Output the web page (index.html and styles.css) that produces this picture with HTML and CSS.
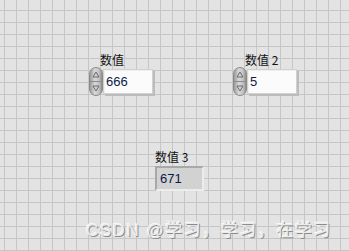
FILE: index.html
```html
<!DOCTYPE html>
<html>
<head>
<meta charset="utf-8">
<link rel="stylesheet" href="styles.css">
</head>
<body>
<div class="panel">
  <div class="ctrl c1">
    <div class="label">数值</div>
    <div class="row">
      <div class="spin">
        <div class="half up"><svg width="8" height="7" viewBox="0 0 8 7"><path d="M1 6 L4 1 L7 6 Z" fill="none" stroke="#6a6a6a" stroke-width="1"/></svg></div>
        <div class="half down"><svg width="8" height="7" viewBox="0 0 8 7"><path d="M1 1 L4 6 L7 1 Z" fill="none" stroke="#6a6a6a" stroke-width="1"/></svg></div>
      </div>
      <div class="box">666</div>
    </div>
  </div>
  <div class="ctrl c2">
    <div class="label">数值 2</div>
    <div class="row">
      <div class="spin">
        <div class="half up"><svg width="8" height="7" viewBox="0 0 8 7"><path d="M1 6 L4 1 L7 6 Z" fill="none" stroke="#6a6a6a" stroke-width="1"/></svg></div>
        <div class="half down"><svg width="8" height="7" viewBox="0 0 8 7"><path d="M1 1 L4 6 L7 1 Z" fill="none" stroke="#6a6a6a" stroke-width="1"/></svg></div>
      </div>
      <div class="box">5</div>
    </div>
  </div>
  <div class="ctrl c3">
    <div class="label">数值 3</div>
    <div class="ind">671</div>
  </div>
  <div class="mark">CSDN @学习，学习，在学习</div>
</div>
</body>
</html>
```
FILE: styles.css
```css
html, body {
  margin: 0;
  padding: 0;
}
.panel {
  position: relative;
  width: 349px;
  height: 251px;
  overflow: hidden;
  background-color: #e3e3e3;
  background-image:
    linear-gradient(to right, #c6c6c6 1px, transparent 1px),
    linear-gradient(to bottom, #c6c6c6 1px, transparent 1px);
  background-size: 12px 12px;
  background-position: 4px 10px;
  font-family: "Liberation Sans", "Noto Sans CJK SC", sans-serif;
}
.ctrl {
  position: absolute;
  display: flex;
  flex-direction: column;
}
.c1 { left: 89px; top: 51px; }
.c2 { left: 233px; top: 51px; }
.c3 { left: 155px; top: 148px; }
.label {
  font-family: "Noto Sans CJK SC", sans-serif;
  font-size: 12px;
  line-height: 17px;
  color: #111;
}
.c1 .label { padding-left: 11px; }
.c2 .label { padding-left: 12px; }
.row {
  display: flex;
  align-items: center;
  margin-top: -1px;
}
.spin {
  width: 14px;
  height: 29px;
  border-radius: 7px;
  background: linear-gradient(to right, #9a9a9a, #d8d8d8 40%, #c4c4c4 75%, #8c8c8c);
  border: 1px solid #8a8a8a;
  box-sizing: border-box;
  display: flex;
  flex-direction: column;
  overflow: hidden;
}
.half {
  flex: 1;
  display: flex;
  align-items: center;
  justify-content: center;
}
.up { border-bottom: 1px solid #8a8a8a; }
.box {
  width: 50px;
  height: 25px;
  box-sizing: border-box;
  background: #fbfbfb;
  border: 1px solid #d0d0d0;
  box-shadow: 2px 2px 0 #bcbcbc, inset 1px 1px 0 #efefef;
  font-size: 13px;
  line-height: 23px;
  padding-left: 2px;
  color: #0b1a4a;
}
.ind {
  margin-top: 1px;
  width: 49px;
  height: 25px;
  box-sizing: border-box;
  background: #d2d2d2;
  border-top: 2px solid #a8a8a8;
  border-left: 2px solid #a8a8a8;
  border-right: 2px solid #ececec;
  border-bottom: 2px solid #ececec;
  font-size: 13px;
  line-height: 21px;
  padding-left: 3px;
  color: #0b1a4a;
}
.mark {
  position: absolute;
  left: 86px;
  top: 219px;
  font-family: "Liberation Sans", "Noto Sans CJK SC", sans-serif;
  font-size: 17px;
  line-height: 24px;
  letter-spacing: 1.5px;
  color: #ececec;
  text-shadow: 1px 1px 0 #8c8c8c, -1px -1px 0 #f8f8f8;
  white-space: nowrap;
}
```
